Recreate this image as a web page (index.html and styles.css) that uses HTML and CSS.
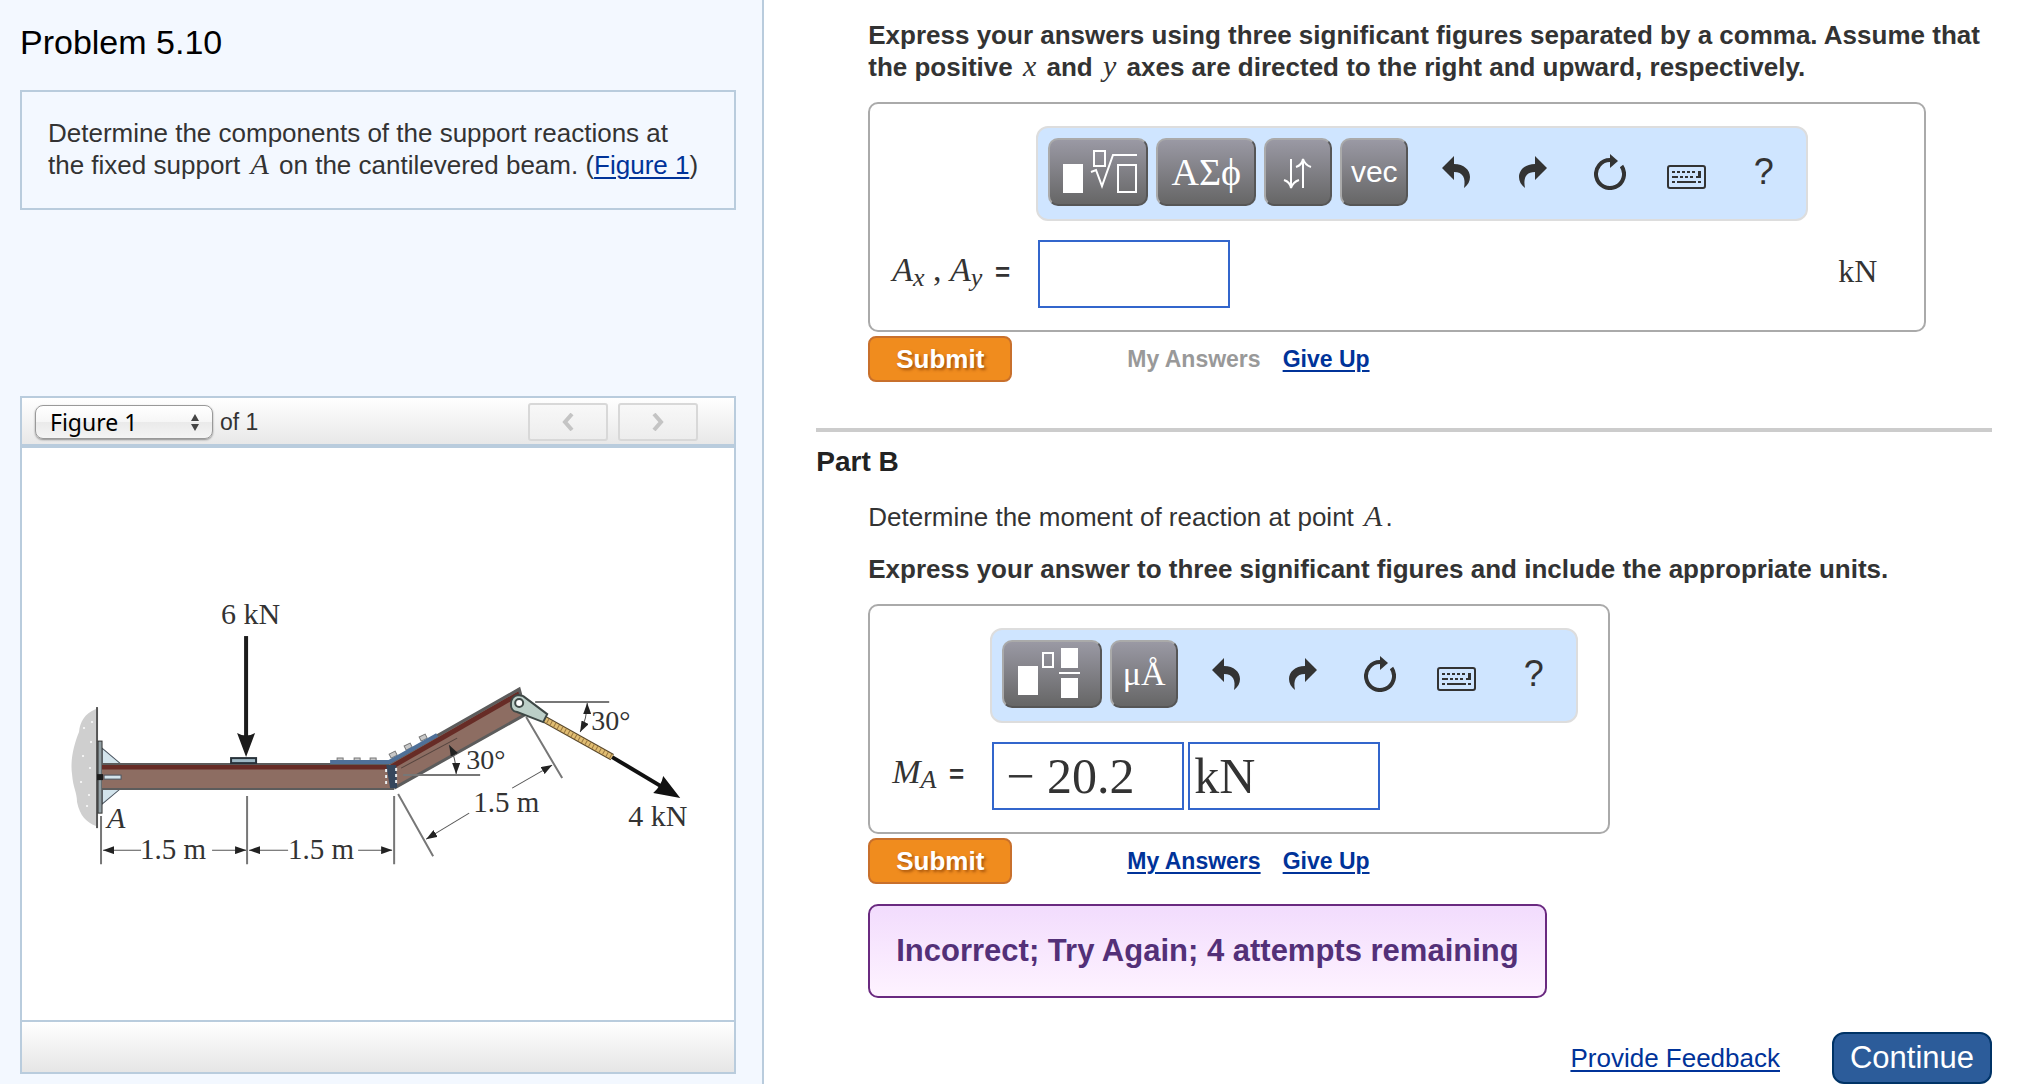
FILE: index.html
```html
<!DOCTYPE html>
<html lang="en">
<head>
    <meta charset="UTF-8">
    <meta name="viewport" content="width=device-width, initial-scale=1.0">
    <title>Problem 5.10</title>
    <link rel="stylesheet" href="styles.css">
</head>
<body>
    <!-- shared toolbar icons -->
    <svg class="sprite" aria-hidden="true">
        <symbol id="icon-undo" viewBox="0 0 28 32">
            <path d="M0 12 L12 0 V8 C22 8 28 14 28 21 C28 25 26 29 22 32 C24 22 21 16 12 16 V24 Z"/>
        </symbol>
        <symbol id="icon-redo" viewBox="0 0 28 32">
            <path d="M28 12 L16 0 V8 C6 8 0 14 0 21 C0 25 2 29 6 32 C4 22 7 16 16 16 V24 Z"/>
        </symbol>
        <symbol id="icon-reset" viewBox="0 0 32 36">
            <path d="M16 6 A14 14 0 1 0 27.500 12" fill="none" stroke="#333" stroke-width="4"/>
            <path d="M16 0 L24 7 L16 14 Z"/>
        </symbol>
        <symbol id="icon-keyboard" viewBox="0 0 40 36">
            <rect x="1" y="12" width="37" height="22" rx="2" fill="none" stroke="#333" stroke-width="2"/>
            <path d="M5 17h3v2h-3z M10 17h3v2h-3z M15 17h3v2h-3z M20 17h3v2h-3z M25 17h3v2h-3z M31 17h3v7h-5v-2h2z M5 22h6v2h-6z M13 22h3v2h-3z M18 22h3v2h-3z M23 22h3v2h-3z M5 27h3v2h-3z M10 27h19v2h-19z M31 27h3v2h-3z"/>
        </symbol>
    </svg>

    <div class="page">
        <aside class="sidebar">
            <h1 class="title">Problem 5.10</h1>
            <div class="question">
                Determine the components of the support reactions at the fixed support <i class="math">A</i> on the cantilevered beam. (<a href="#figure">Figure 1</a>)
            </div>

            <section class="viewer" id="figure">
                <div class="viewer-head">
                    <div class="select-wrap">
                        <select class="figure-select" id="figure-select" aria-label="Figure">
                            <option>Figure 1</option>
                        </select>
                        <svg class="select-arrows" width="10" height="18" viewBox="0 0 10 18"><path d="M5 0 L9 7 H1 Z M5 17 L1 10 H9 Z" fill="#444"/></svg>
                    </div>
                    <label class="figure-count" for="figure-select">of 1</label>
                    <div class="pager">
                        <button class="pager-button" type="button" aria-label="Previous figure" disabled>
                            <svg width="14" height="18" viewBox="0 0 14 18"><path d="M11 1 L4 9 L11 17" fill="none" stroke="#c4c4c4" stroke-width="4"/></svg>
                        </button>
                        <button class="pager-button" type="button" aria-label="Next figure" disabled>
                            <svg width="14" height="18" viewBox="0 0 14 18"><path d="M3 1 L10 9 L3 17" fill="none" stroke="#c4c4c4" stroke-width="4"/></svg>
                        </button>
                    </div>
                </div>

                <div class="viewer-body">
                    <svg class="drawing" viewBox="22 448 712 572" role="img" aria-label="Cantilevered beam fixed at A with 6 kN and 4 kN loads">
                        <defs>
                            <marker id="arrow" viewBox="0 0 11 8" refX="11" refY="4" markerWidth="11" markerHeight="8" markerUnits="userSpaceOnUse" orient="auto-start-reverse">
                                <path d="M0 0 L11 4 L0 8 Z" fill="#222"/>
                            </marker>
                        </defs>

                        <!-- wall and base plate -->
                        <path d="M96 709 C84 714 80 722 79 732 C74 744 70 760 72 774 C73 788 77 792 77 802 C80 816 86 822 96 826 Z" fill="#cfcfcf"/>
                        <path d="M83 728h2 M90 742h2 M82 756h2 M89 768h2 M80 782h2 M88 795h2 M86 806h2 M91 722h2" stroke="#f2f2f2" stroke-width="2"/>
                        <path d="M97 707 V828" stroke="#555" stroke-width="2"/>
                        <path d="M102 748 L121 764 H102 Z M102 789 H120 L102 804 Z" fill="#d3e4ec" stroke="#4b5560"/>
                        <rect x="98" y="741" width="4" height="72" fill="#93a0a5" stroke="#333"/>

                        <!-- horizontal beam -->
                        <path d="M102 763 H390 L394 789 H102 Z" fill="#8d6d62"/>
                        <path d="M102 767 H389" stroke="#672c26" stroke-width="5"/>
                        <path d="M102 764 H389 M102 789 H394" stroke="#5c5c5c" stroke-width="2"/>
                        <rect x="104" y="775" width="17" height="4" fill="#d3e4ec" stroke="#4b5560"/>
                        <rect x="97" y="774" width="6" height="6" fill="#1c1c1c"/>
                        <rect x="231" y="758" width="25" height="5" fill="#9fb8c4" stroke="#28323a" stroke-width="2"/>

                        <!-- inclined beam -->
                        <path d="M389 763 L519 688 L526 715 L394 788 Z" fill="#8d6d62"/>
                        <path d="M391 767 L520 693" stroke="#672c26" stroke-width="5"/>
                        <path d="M389 763 L519 689 L526 714 L394 788" fill="none" stroke="#5c5c5c" stroke-width="3"/>
                        <path d="M401 768 L457 738" stroke="#55443e"/>
                        <g fill="#c8c8c8" stroke="#777">
                            <path d="M337 761v-3h6v3z M354 761v-3h6v3z M370 761v-3h6v3z M391 758l-2-4 6-3 2 4z M406 750l-2-4 6-3 2 4z M421 741l-2-4 6-3 2 4z"/>
                        </g>
                        <path d="M330 762 H389 L437 735" fill="none" stroke="#4f7098" stroke-width="4"/>
                        <path d="M386 765 L396 765 L397 788 L390 788 Z" fill="#35465c"/>
                        <path d="M386 769v15 M396 768v15" stroke="#e8edf0" stroke-width="2" stroke-dasharray="3 3"/>

                        <!-- rope and clevis -->
                        <path d="M544 719 L612 757" stroke="#59482c" stroke-width="7"/>
                        <path d="M544 719 L612 757" stroke="#e0bd72" stroke-width="5"/>
                        <path d="M547 721 L612 757" stroke="#9a7740" stroke-width="5" stroke-dasharray="1 3"/>
                        <path d="M523 696 L547 714 L543 722 L517 712 C508 711 509 696 518 695 Z" fill="#bccfc8" stroke="#3e4846" stroke-width="2"/>
                        <circle cx="519" cy="703" r="4" fill="#fff" stroke="#3e4846" stroke-width="2"/>

                        <!-- loads -->
                        <path d="M246 636 V738" stroke="#1c1c1c" stroke-width="4"/>
                        <path d="M237 733 Q246 738 255 733 L246 757 Z" fill="#1c1c1c"/>
                        <path d="M612 757 L664 788" stroke="#111" stroke-width="4"/>
                        <path d="M663 776 L680 798 L653 793 Q661 786 663 776 Z" fill="#111"/>

                        <!-- extension lines -->
                        <path d="M101 816 V864 M247 796 V864 M394 796 V864 M398 794 L433 856 M526 717 L562 778 M535 702 H609 M403 775 H480" stroke="#777" stroke-width="2" fill="none"/>

                        <!-- dimension arrows -->
                        <g fill="none" stroke="#555" stroke-width="1" marker-end="url(#arrow)">
                            <path d="M141 850 H103"/>
                            <path d="M212 850 H246"/>
                            <path d="M288 850 H249"/>
                            <path d="M358 850 H392"/>
                            <path d="M469 813 L426 839"/>
                            <path d="M512 788 L552 765"/>
                        </g>
                        <g fill="none" stroke="#555" marker-start="url(#arrow)" marker-end="url(#arrow)">
                            <path d="M449 745 Q456 758 456 774"/>
                            <path d="M587 703 Q587 718 580 732"/>
                        </g>

                        <g class="drawing-text">
                            <text x="221" y="624" font-size="30">6 kN</text>
                            <text x="628" y="826" font-size="30">4 kN</text>
                            <text x="107" y="828" font-size="30" font-style="italic">A</text>
                            <text x="140" y="859" font-size="29">1.5 m</text>
                            <text x="288" y="859" font-size="29">1.5 m</text>
                            <text x="473" y="812" font-size="29">1.5 m</text>
                            <text x="466" y="769" font-size="28">30°</text>
                            <text x="591" y="730" font-size="28">30°</text>
                        </g>
                    </svg>
                </div>
                <div class="viewer-foot"></div>
            </section>
        </aside>

        <main class="content">
            <section class="part">
                <p class="instructions">Express your answers using three significant figures separated by a comma. Assume that the positive <i class="math">x</i> and <i class="math">y</i> axes are directed to the right and upward, respectively.</p>

                <form class="answer answer-a">
                    <div class="toolbar">
                        <button class="tool wide" type="button" aria-label="Templates">
                            <svg width="100" height="64" viewBox="0 2 100 64">
                                <rect x="15" y="26" width="20" height="29" fill="#fff"/>
                                <path d="M46 13 H57 V28 H46 Z M70 27 H88 V54 H70 Z M43 34 L48 32 L54 48 L65 17 H89" fill="none" stroke="#fff" stroke-width="2"/>
                            </svg>
                        </button>
                        <button class="tool wide greek" type="button">ΑΣϕ</button>
                        <button class="tool" type="button" aria-label="Arrows">
                            <svg width="68" height="64" viewBox="0 2 68 64">
                                <path d="M27 21 V50 M20 42 Q26 44 27 50 Q29 44 35 42 M39 50 V21 M32 29 Q38 27 39 21 Q41 27 47 29" fill="none" stroke="#fff" stroke-width="2"/>
                            </svg>
                        </button>
                        <button class="tool" type="button">vec</button>
                        <div class="actions">
                            <button class="action" type="button" aria-label="Undo"><svg width="28" height="32"><use href="#icon-undo"/></svg></button>
                            <button class="action" type="button" aria-label="Redo"><svg width="28" height="32"><use href="#icon-redo"/></svg></button>
                            <button class="action" type="button" aria-label="Reset"><svg width="32" height="36"><use href="#icon-reset"/></svg></button>
                            <button class="action" type="button" aria-label="Keyboard"><svg width="40" height="36"><use href="#icon-keyboard"/></svg></button>
                            <button class="action" type="button">?</button>
                        </div>
                    </div>
                    <label class="answer-label" for="reactions"><i>A<sub>x</sub></i> , <i>A<sub>y</sub></i> <b>=</b></label>
                    <div class="fields">
                        <input class="field" id="reactions" type="text">
                    </div>
                    <span class="unit">kN</span>
                </form>

                <div class="submit-row">
                    <button class="submit" type="button">Submit</button>
                    <span class="muted">My Answers</span>
                    <a href="#">Give Up</a>
                </div>
            </section>

            <hr class="divider">
            <h2 class="part-title">Part B</h2>

            <section class="part">
                <p class="prompt">Determine the moment of reaction at point <i class="math">A</i>.</p>
                <p class="instructions">Express your answer to three significant figures and include the appropriate units.</p>

                <form class="answer answer-b">
                    <div class="toolbar">
                        <button class="tool wide" type="button" aria-label="Templates">
                            <svg width="100" height="64" viewBox="0 2 100 64">
                                <path d="M16 26h20v29h-20z M59 8h17v20h-17z M57 32h21v2h-21z M59 38h17v20h-17z" fill="#fff"/>
                                <path d="M41 13 H51 V27 H41 Z" fill="none" stroke="#fff" stroke-width="2"/>
                            </svg>
                        </button>
                        <button class="tool greek" type="button">μÅ</button>
                        <div class="actions">
                            <button class="action" type="button" aria-label="Undo"><svg width="28" height="32"><use href="#icon-undo"/></svg></button>
                            <button class="action" type="button" aria-label="Redo"><svg width="28" height="32"><use href="#icon-redo"/></svg></button>
                            <button class="action" type="button" aria-label="Reset"><svg width="32" height="36"><use href="#icon-reset"/></svg></button>
                            <button class="action" type="button" aria-label="Keyboard"><svg width="40" height="36"><use href="#icon-keyboard"/></svg></button>
                            <button class="action" type="button">?</button>
                        </div>
                    </div>
                    <label class="answer-label" for="moment"><i>M<sub>A</sub></i> <b>=</b></label>
                    <div class="fields">
                        <input class="field number" id="moment" type="text" value="− 20.2">
                        <input class="field" type="text" value="kN" aria-label="Units">
                    </div>
                </form>

                <div class="submit-row">
                    <button class="submit" type="button">Submit</button>
                    <a href="#">My Answers</a>
                    <a href="#">Give Up</a>
                </div>

                <div class="feedback">Incorrect; Try Again; 4 attempts remaining</div>
            </section>

            <footer class="footer">
                <a href="#">Provide Feedback</a>
                <button class="continue" type="button">Continue</button>
            </footer>
        </main>
    </div>
</body>
</html>
```
FILE: styles.css
```css
* {
    box-sizing: border-box;
}
body {
    margin: 0;
    background: #fff;
    color: #333;
    font-family: "Liberation Sans", Arial, sans-serif;
    font-size: 26px;
    line-height: 32px;
}
h1, h2, p {
    margin: 0;
}
a {
    color: #039;
    text-underline-offset: 3px;
    text-decoration-thickness: 2px;
}
button, input, select {
    margin: 0;
    font-family: inherit;
}
svg {
    display: block;
}
.sprite {
    position: absolute;
    width: 0;
    height: 0;
}
.page {
    display: grid;
    grid-template-columns: 3fr 5fr;
    min-height: 100vh;
}
.math {
    padding: 0 3px;
    font-family: "Liberation Serif", serif;
    font-size: 30px;
    font-weight: normal;
    line-height: 24px;
}

/* left column */
.sidebar {
    display: flex;
    flex-direction: column;
    padding: 22px 26px 10px 20px;
    background: #f3f8ff;
    border-right: 2px solid #b9ccdd;
}
.title {
    font-size: 34px;
    font-weight: normal;
    line-height: 40px;
    color: #000;
}
.question {
    margin-top: 28px;
    padding: 25px 26px 27px;
    border: 2px solid #b9ccdd;
}
.viewer {
    display: flex;
    flex-direction: column;
    flex: 1;
    margin-top: 186px;
    border: 2px solid #b9ccdd;
}
.viewer-head {
    display: flex;
    align-items: center;
    height: 50px;
    padding: 2px 36px 0 13px;
    border-bottom: 4px solid #b9ccdd;
    background: linear-gradient(#fff, #e8e8e8);
}
.select-wrap {
    position: relative;
}
.select-arrows {
    position: absolute;
    top: 9px;
    right: 13px;
    pointer-events: none;
}
.figure-select {
    display: block;
    width: 178px;
    height: 34px;
    padding: 0 14px;
    appearance: none;
    border: 1px solid #999;
    border-radius: 8px;
    background: linear-gradient(#fff, #f6f6f6 50%, #eaeaea 50%, #f4f4f4);
    box-shadow: 0 1px 2px rgba(0, 0, 0, 0.4);
    color: #000;
    font-family: "Noto Sans", sans-serif;
    font-size: 23px;
}
.figure-count {
    margin-left: 7px;
    font-size: 23px;
}
.pager {
    display: flex;
    gap: 10px;
    margin-left: auto;
}
.pager-button {
    display: flex;
    align-items: center;
    justify-content: center;
    width: 80px;
    height: 38px;
    border: 2px solid #d8d8d8;
    border-radius: 3px;
    background: linear-gradient(#f8f8f8, #ededed);
}
.viewer-body {
    flex: 1;
    background: #fff;
}
.drawing {
    width: 100%;
}
.drawing-text {
    font-family: "Liberation Serif", serif;
    fill: #333;
}
.viewer-foot {
    height: 52px;
    border-top: 2px solid #b9ccdd;
    background: linear-gradient(#fff, #e6e6e6);
}

/* right column */
.content {
    display: flex;
    flex-direction: column;
    padding: 19px 46px 0 52px;
}
.part {
    padding-left: 52px;
}
.instructions {
    font-weight: bold;
}
.prompt {
    margin-bottom: 20px;
}
.answer {
    display: grid;
    align-items: center;
    row-gap: 19px;
    width: fit-content;
    margin-top: 19px;
    padding: 22px;
    border: 2px solid #aaa;
    border-radius: 10px;
}
.answer-a {
    grid-template-columns: 144px auto auto;
    padding-right: 47px;
}
.answer-b {
    grid-template-columns: 98px auto;
    padding-right: 30px;
}
.toolbar {
    grid-column: 2;
    display: flex;
    align-items: flex-start;
    gap: 8px;
    height: 95px;
    padding: 10px 4px 0 10px;
    border: 2px solid #ddd;
    border-radius: 12px;
    background: #cfe5ff;
}
.tool {
    display: flex;
    align-items: center;
    justify-content: center;
    width: 68px;
    height: 68px;
    padding: 0;
    border: 2px outset #aaa;
    border-radius: 10px;
    background: linear-gradient(#9a99a4, #666);
    color: #fff;
    font-size: 30px;
}
.tool.wide {
    width: 100px;
}
.tool svg {
    flex: none;
}
.greek {
    font-family: "Liberation Serif", serif;
    font-size: 34px;
}
.greek.wide {
    font-size: 38px;
}
.actions {
    display: flex;
    margin-left: 1px;
}
.action {
    display: flex;
    align-items: center;
    justify-content: center;
    width: 77px;
    height: 68px;
    padding: 0;
    border: 0;
    background: none;
    color: #333;
    fill: #333;
    font-size: 36px;
}
.answer-label {
    grid-column: 1;
    padding-bottom: 6px;
    font-family: "Liberation Serif", serif;
    font-size: 34px;
    white-space: nowrap;
}
.answer-label sub {
    font-size: 26px;
    line-height: 0;
    vertical-align: -5px;
}
.answer-label b {
    margin-left: 4px;
    font-family: "Liberation Sans", Arial, sans-serif;
    font-size: 26px;
}
.fields {
    display: flex;
    gap: 4px;
    padding-left: 2px;
}
.field {
    width: 192px;
    height: 68px;
    padding: 0 4px;
    border: 2px solid #36c;
    background: #fff;
    color: #333;
    font-family: "Liberation Serif", serif;
    font-size: 50px;
}
.number {
    padding-left: 12px;
}
.unit {
    padding: 0 0 6px 30px;
    font-family: "Liberation Serif", serif;
    font-size: 32px;
}
.submit-row {
    display: flex;
    align-items: center;
    gap: 22px;
    margin-top: 4px;
    font-size: 23px;
    font-weight: bold;
}
.submit {
    width: 144px;
    height: 46px;
    margin-right: 93px;
    padding: 0;
    border: 2px solid #c8702c;
    border-radius: 8px;
    background: #f08c1e;
    color: #fff;
    font-size: 26px;
    font-weight: bold;
    text-shadow: 2px 2px 3px rgba(120, 50, 0, 0.6);
}
.muted {
    color: #999;
}
.divider {
    width: 100%;
    height: 4px;
    margin: 46px 0 14px;
    border: 0;
    background: #ccc;
}
.part-title {
    margin-bottom: 23px;
    color: #222;
    font-size: 28px;
    line-height: 32px;
}
.feedback {
    width: fit-content;
    margin-top: 20px;
    padding: 25px 26px;
    border: 2px solid #6a2a80;
    border-radius: 10px;
    background: linear-gradient(#f2dcfd, #fef3ff);
    color: #533078;
    font-size: 31px;
    font-weight: bold;
    line-height: 40px;
}
.footer {
    display: flex;
    align-items: center;
    justify-content: flex-end;
    gap: 52px;
    margin-top: auto;
}
.continue {
    width: 160px;
    height: 52px;
    padding: 0;
    border: 2px solid #036;
    border-radius: 12px;
    background: #2c5c9a;
    color: #fff;
    font-size: 31px;
}
```
